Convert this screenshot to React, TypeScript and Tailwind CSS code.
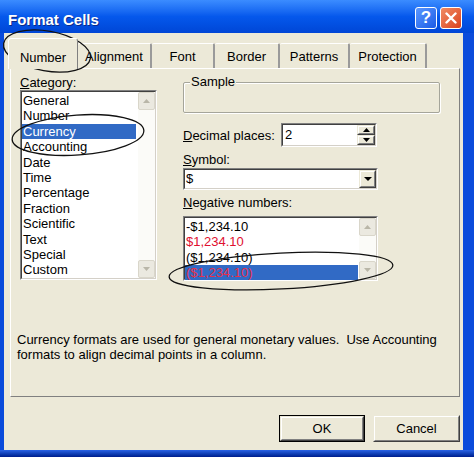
import React from "react";

const Sunken = ({ className = "", inner = "", children }: { className?: string; inner?: string; children?: React.ReactNode }) => (
  <div className={`border border-t-[#808080] border-l-[#808080] border-b-white border-r-white ${className}`}>
    <div className={`h-full w-full border border-t-[#404040] border-l-[#404040] border-b-[#D4D0C8] border-r-[#D4D0C8] bg-white ${inner}`}>
      {children}
    </div>
  </div>
);

const Raised = ({ className = "", children }: { className?: string; children?: React.ReactNode }) => (
  <div className={`border border-t-[#ECE9D8] border-l-[#ECE9D8] border-b-[#404040] border-r-[#404040] bg-[#ECE9D8] ${className}`}>
    <div className="h-full w-full border border-t-white border-l-white border-b-[#808080] border-r-[#808080] flex items-center justify-center">
      {children}
    </div>
  </div>
);

const Tri = ({ up = false, color = "#000", size = 7 }: { up?: boolean; color?: string; size?: number }) => (
  <svg width={size} height={Math.ceil(size / 2) + 1} viewBox={`0 0 ${size} ${Math.ceil(size / 2) + 1}`}>
    {up ? (
      <polygon points={`0,${Math.ceil(size / 2)} ${size},${Math.ceil(size / 2)} ${size / 2},0`} fill={color} />
    ) : (
      <polygon points={`0,0 ${size},0 ${size / 2},${Math.ceil(size / 2)}`} fill={color} />
    )}
  </svg>
);

const XpScrollBtn = ({ up }: { up?: boolean }) => (
  <div className="h-[18px] w-full rounded-[2px] border border-[#D9D6CA] bg-[#EBE9E0] flex items-center justify-center">
    <Tri up={up} color="#B9B6A8" size={7} />
  </div>
);

const XpScrollbar = () => (
  <div className="flex h-full w-[17px] flex-col bg-[#FBFBF8]">
    <XpScrollBtn up />
    <div className="flex-1" />
    <XpScrollBtn />
  </div>
);

const categories = [
  "General",
  "Number",
  "Currency",
  "Accounting",
  "Date",
  "Time",
  "Percentage",
  "Fraction",
  "Scientific",
  "Text",
  "Special",
  "Custom",
];

const tabs = [
  { label: "Alignment", w: "w-[74px]" },
  { label: "Font", w: "w-[63px]" },
  { label: "Border", w: "w-[65px]" },
  { label: "Patterns", w: "w-[70px]" },
  { label: "Protection", w: "w-[77px]" },
];

export default function App() {
  return (
    <div
      className="relative flex h-[457px] w-[474px] flex-col overflow-hidden bg-[#0A4BDB] text-[13px] text-black"
      style={{ fontFamily: '"Liberation Sans", Arial, sans-serif' }}
    >
      {/* Title bar */}
      <div className="flex h-[33px] items-center bg-linear-to-b from-[#3B8CFF] via-[#0558EC] to-[#0046D6] pl-[8px] pr-[12px]">
        <div className="flex-1 pt-[5px] text-[15px] font-bold leading-none text-white [text-shadow:1px_1px_0_#0A2A8A]">
          Format Cells
        </div>
        <div className="flex gap-[3px] pt-[2px]">
          <div className="flex h-[22px] w-[22px] items-center justify-center rounded-[3px] border border-white bg-linear-to-br from-[#5C98FF] to-[#1B5AE6] text-[17px] font-bold leading-none text-white">
            ?
          </div>
          <div className="flex h-[22px] w-[22px] items-center justify-center rounded-[3px] border border-white bg-linear-to-br from-[#F08A62] to-[#D9401A]">
            <svg width="12" height="12" viewBox="0 0 12 12">
              <path d="M1.5 1.5 L10.5 10.5 M10.5 1.5 L1.5 10.5" stroke="#fff" strokeWidth="2.4" strokeLinecap="round" />
            </svg>
          </div>
        </div>
      </div>

      {/* Body */}
      <div className="ml-[4px] mr-[11px] flex flex-1 flex-col bg-[#ECE9D8]">
        {/* Tabs */}
        <div className="flex h-[35px] items-end pl-[4px] pt-[5px]">
          <div className="relative z-10 -mb-[1px] h-[31px] w-[70px] rounded-t-[3px] border-l border-t border-r border-l-white border-t-white border-r-[#808080] bg-[#ECE9D8] pt-[11px] text-center leading-[15px]">
            Number
          </div>
          {tabs.map((t) => (
            <div
              key={t.label}
              className={`h-[25px] ${t.w} rounded-t-[2px] border-t border-r-2 border-t-white border-r-[#9A9A9A] pt-[5px] text-center leading-[15px]`}
            >
              {t.label}
            </div>
          ))}
        </div>

        {/* Panel */}
        <div className="ml-[6px] flex h-[329px] w-[450px] flex-col border border-t-white border-l-white border-b-[#808080] border-r-[#808080] pt-[6px]">
          <div className="flex pl-[9px]">
            {/* Left column */}
            <div className="flex w-[137px] flex-col">
              <div className="h-[15px] leading-[15px]">
                <span className="underline">C</span>ategory:
              </div>
              <Sunken className="h-[190px]" inner="flex">
                <div className="flex-1 pt-[1px]">
                  {categories.map((c) => (
                    <div
                      key={c}
                      className={`h-[15.4px] pl-[1px] leading-[15.4px] ${c === "Currency" ? "mr-[2px] bg-[#316AC5] text-white" : ""}`}
                    >
                      {c}
                    </div>
                  ))}
                </div>
                <XpScrollbar />
              </Sunken>
            </div>

            {/* Right column */}
            <div className="ml-[26px] flex w-[257px] flex-col">
              <div className="mt-[7px] h-[31px] rounded-[2px] border border-[#A5A59A] shadow-[inset_1px_1px_0_#fff,1px_1px_0_#fff]">
                <div className="-mt-[9px] ml-[6px] w-fit bg-[#ECE9D8] px-[1px] leading-[15px]">Sample</div>
              </div>

              <div className="mt-[10px] flex h-[24px] items-center">
                <div className="w-[98px] leading-[15px]">
                  <span className="underline">D</span>ecimal places:
                </div>
                <Sunken className="h-[24px] w-[96px]" inner="flex">
                  <div className="flex-1 pl-[2px] leading-[20px]">2</div>
                  <div className="flex w-[18px] flex-col">
                    <Raised className="h-[10px] w-full">
                      <Tri up size={7} />
                    </Raised>
                    <Raised className="h-[10px] w-full">
                      <Tri size={7} />
                    </Raised>
                  </div>
                </Sunken>
              </div>

              <div className="mt-[5px] h-[15px] leading-[15px]">
                <span className="underline">S</span>ymbol:
              </div>
              <Sunken className="mt-[1px] h-[22px] w-[195px]" inner="flex">
                <div className="flex-1 pl-[1px] leading-[18px]">$</div>
                <Raised className="h-full w-[17px]">
                  <Tri size={8} />
                </Raised>
              </Sunken>

              <div className="mt-[5px] h-[15px] leading-[15px]">
                <span className="underline">N</span>egative numbers:
              </div>
              <Sunken className="mt-[6px] h-[65px] w-[195px]" inner="flex">
                <div className="flex-1 pt-[1px]">
                  <div className="h-[15.3px] pl-[1px] leading-[15.3px]">-$1,234.10</div>
                  <div className="h-[15.3px] pl-[1px] leading-[15.3px] text-[#E0102F]">$1,234.10</div>
                  <div className="h-[15.3px] pl-[1px] leading-[15.3px]">($1,234.10)</div>
                  <div className="mr-[1px] h-[15.3px] bg-[#316AC5] pl-[1px] leading-[15.3px] text-[#E8304A]">($1,234.10)</div>
                </div>
                <XpScrollbar />
              </Sunken>
            </div>
          </div>

          <div className="mt-[51px] pl-[6px] leading-[15px]">
            Currency formats are used for general monetary values.&nbsp; Use Accounting
            <br />
            formats to align decimal points in a column.
          </div>
        </div>

        {/* Buttons */}
        <div className="mt-[18px] flex justify-end gap-[8px] pr-[3px]">
          <div className="h-[27px] w-[86px] border border-black">
            <Raised className="h-full w-full">OK</Raised>
          </div>
          <Raised className="h-[27px] w-[87px]">Cancel</Raised>
        </div>
      </div>
      <div className="h-[7px] bg-linear-to-b from-[#2A63E6] to-[#001C8C]" />

      {/* Annotation ellipses */}
      <svg className="pointer-events-none absolute inset-0" width="474" height="457" viewBox="0 0 474 457">
        <ellipse cx="47" cy="51" rx="44" ry="20" transform="rotate(10 47 51)" fill="none" stroke="#111" strokeWidth="1.3" />
        <ellipse cx="78" cy="135" rx="66" ry="20" transform="rotate(-4 78 135)" fill="none" stroke="#111" strokeWidth="1.3" />
        <ellipse cx="281" cy="271" rx="112" ry="18" transform="rotate(-3 281 271)" fill="none" stroke="#111" strokeWidth="1.3" />
      </svg>
    </div>
  );
}
